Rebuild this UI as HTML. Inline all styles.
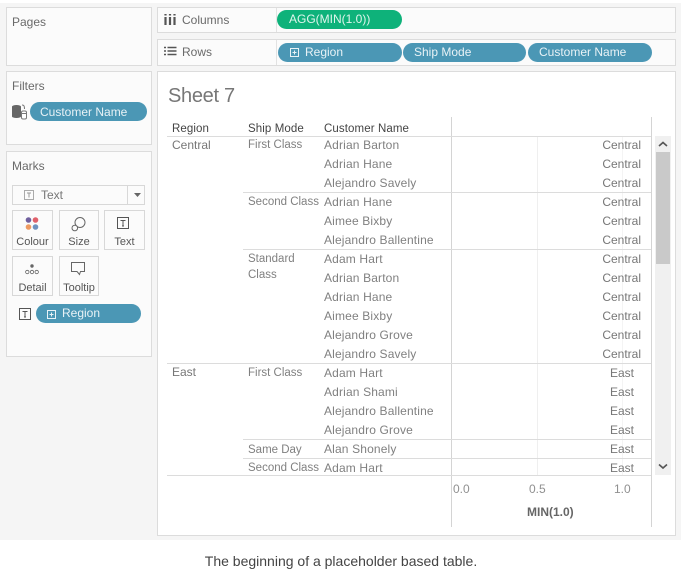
<!DOCTYPE html>
<html><head><meta charset="utf-8"><style>
html,body{margin:0;padding:0;background:#fff}
#r{position:relative;width:685px;height:576px;overflow:hidden;font-family:"Liberation Sans",sans-serif;background:#fff;filter:blur(.25px)}
#r div{position:absolute;box-sizing:border-box;white-space:nowrap}
.p{background:#fbfbfb;border:1px solid #dcdcdc}
.t{font-size:12px;letter-spacing:.15px;color:#808080;line-height:16px;height:16px}
.s{font-size:11.5px;letter-spacing:0;color:#808080;line-height:16px;height:16px}
.n{font-size:12px;letter-spacing:0;color:#777;line-height:16px;height:16px}
.h{font-size:11.5px;letter-spacing:.1px;color:#444;line-height:16px;height:16px}
.l{font-size:12px;letter-spacing:0;color:#6a6a6a;line-height:16px;height:16px}
.pill{background:#4b97b5;color:#e8f2f6;border-radius:10px;height:19px;line-height:19px;font-size:12px;letter-spacing:0}
.b{background:#fbfbfb;border:1px solid #d8d8d8;font-size:11px;color:#555;text-align:center;line-height:14px;padding-top:24px}
.hl{background:#dcdcdc;height:1px}
.v{background:#d4d4d4;width:1px}
svg{position:absolute}
</style></head><body><div id="r">
<div style="left:0;top:3px;width:681px;height:537px;background:#f5f5f5"></div>

<div class="p" style="left:6px;top:7px;width:146px;height:59px"></div>
<div class="l" style="left:12px;top:14px">Pages</div>
<div class="p" style="left:157px;top:7px;width:519px;height:26px"></div>
<div class="p" style="left:157px;top:39px;width:519px;height:27px"></div>
<div class="v" style="left:276px;top:8px;height:24px;background:#e2e2e2"></div>
<div class="v" style="left:276px;top:40px;height:25px;background:#e2e2e2"></div>
<svg style="left:164px;top:13px" width="14" height="13"><path d="M1.500 4v8M6 4v8M10.500 4v8" stroke="#555" stroke-width="2.200"/><path d="M1.500 1v1.500M6 1v1.500M10.500 1v1.500" stroke="#555" stroke-width="2.200"/></svg>
<div class="l" style="left:182px;top:12px">Columns</div>
<svg style="left:164px;top:46px" width="14" height="11"><path d="M0 1.500h2M3.500 1.500h9M0 5h2M3.500 5h9M0 8.500h2M3.500 8.500h9" stroke="#555" stroke-width="1.600"/></svg>
<div class="l" style="left:182px;top:44px">Rows</div>
<div class="pill" style="left:277px;top:10px;width:125px;background:#0eb27a;padding-left:12px;color:#dff5ec">AGG(MIN(1.0))</div>
<div class="pill" style="left:278px;top:43px;width:124px;padding-left:27px">Region</div>
<svg style="left:290px;top:48px" width="9" height="9"><path d="M.5.500h8v8h-8zM2.500 4.500h4M4.500 2.500v4" fill="none" stroke="#e8f2f6"/></svg>
<div class="pill" style="left:403px;top:43px;width:123px;padding-left:11px">Ship Mode</div>
<div class="pill" style="left:528px;top:43px;width:124px;padding-left:11px">Customer Name</div>

<div class="p" style="left:6px;top:71px;width:146px;height:74px"></div>
<div class="l" style="left:12px;top:78px">Filters</div>
<svg style="left:12px;top:104px" width="17" height="17"><path d="M0 2.500a4.500 1.500 0 0 1 9 0v10a4.500 1.500 0 0 1-9 0z" fill="#666"/><rect x="9.500" y="7" width="5" height="8" rx="1.500" fill="#fff" stroke="#777"/><path d="M9.500 9.500h5M10 1c2 0 2.500 1 2.500 4" fill="none" stroke="#777"/></svg>
<div class="pill" style="left:30px;top:102px;width:117px;padding-left:10px;line-height:20px">Customer Name</div>

<div class="p" style="left:6px;top:151px;width:146px;height:206px"></div>
<div class="l" style="left:12px;top:158px">Marks</div>
<div style="left:12px;top:185px;width:133px;height:20px;border:1px solid #d8d8d8;background:#fbfbfb"></div>
<div style="left:127px;top:186px;width:1px;height:18px;background:#d8d8d8"></div>
<svg style="left:134px;top:193px" width="7" height="4"><path d="M0 0h7L3.500 4z" fill="#666"/></svg>
<svg style="left:24px;top:190px" width="11" height="11"><path d="M.5.500h9v9h-9z" fill="none" stroke="#aaa"/><path d="M3 3h4M5 3v4.500" stroke="#999"/></svg>
<div class="l" style="left:41px;top:187px;color:#777">Text</div>

<div class="b" style="left:12px;top:210px;width:41px;height:40px">Colour</div>
<div class="b" style="left:59px;top:210px;width:40px;height:40px">Size</div>
<div class="b" style="left:104px;top:210px;width:41px;height:40px">Text</div>
<div class="b" style="left:12px;top:256px;width:41px;height:40px">Detail</div>
<div class="b" style="left:59px;top:256px;width:40px;height:40px">Tooltip</div>
<svg style="left:24px;top:216px" width="16" height="16"><circle cx="4.500" cy="4" r="2.800" fill="#6f5f9e"/><circle cx="11.500" cy="4" r="2.800" fill="#e0606a"/><circle cx="4.500" cy="11" r="2.800" fill="#ee9a62"/><circle cx="11.500" cy="11" r="2.800" fill="#6f92c0"/></svg>
<svg style="left:71px;top:216px" width="16" height="16"><circle cx="9" cy="6.500" r="5" fill="none" stroke="#666"/><circle cx="3.800" cy="12" r="2.800" fill="#fbfbfb" stroke="#666"/></svg>
<svg style="left:117px;top:217px" width="13" height="13"><path d="M.5.500h11v11h-11z" fill="none" stroke="#555"/><path d="M3.500 3.500h5M6 3.500v5.500M5 9h2" stroke="#555"/></svg>
<svg style="left:25px;top:264px" width="15" height="11"><circle cx="7" cy="2" r="1.700" fill="#666"/><circle cx="2.300" cy="8" r="1.700" fill="none" stroke="#666" stroke-width=".8"/><circle cx="7" cy="8" r="1.700" fill="none" stroke="#666" stroke-width=".8"/><circle cx="11.700" cy="8" r="1.700" fill="none" stroke="#666" stroke-width=".8"/></svg>
<svg style="left:71px;top:262px" width="15" height="14"><path d="M.5.500h13v9H9.500l-1 3-2.500-3H.5z" fill="none" stroke="#666"/></svg>
<svg style="left:19px;top:308px" width="12" height="12"><path d="M.5.500h11v11h-11z" fill="none" stroke="#555"/><path d="M3.500 3.500h5M6 3.500v5.500M5 9h2" stroke="#555"/></svg>
<div class="pill" style="left:36px;top:304px;width:105px;padding-left:26px">Region</div>
<svg style="left:47px;top:310px" width="9" height="9"><path d="M.5.500h8v8h-8zM2.500 4.500h4M4.500 2.500v4" fill="none" stroke="#e8f2f6"/></svg>

<div style="left:157px;top:71px;width:519px;height:465px;background:#fff;border:1px solid #dcdcdc"></div>
<div style="left:168px;top:84px;font-size:20px;line-height:24px;letter-spacing:-.3px;color:#777">Sheet 7</div>

<div class="h" style="left:172px;top:121px">Region</div>
<div class="h" style="left:248px;top:121px">Ship Mode</div>
<div class="h" style="left:324px;top:121px">Customer Name</div>

<div class="v" style="left:451px;top:117px;height:410px"></div>
<div class="v" style="left:651px;top:117px;height:410px"></div>
<div class="v" style="left:537px;top:137px;height:338px;background:#efefef"></div>
<div class="v" style="left:622px;top:137px;height:338px;background:#f4f4f4"></div>

<div class="hl" style="left:167px;top:136px;width:484px"></div>
<div class="hl" style="left:243px;top:192px;width:408px"></div>
<div class="hl" style="left:243px;top:249px;width:408px"></div>
<div class="hl" style="left:167px;top:363px;width:484px"></div>
<div class="hl" style="left:243px;top:439px;width:408px"></div>
<div class="hl" style="left:243px;top:458px;width:408px"></div>
<div class="hl" style="left:167px;top:475px;width:484px"></div>

<div class="n" style="left:172px;top:137px">Central</div>
<div class="n" style="left:172px;top:364px">East</div>
<div class="s" style="left:248px;top:137px">First Class</div>
<div class="s" style="left:248px;top:194px">Second Class</div>
<div class="s" style="left:248px;top:251px">Standard</div>
<div class="s" style="left:248px;top:267px">Class</div>
<div class="s" style="left:248px;top:365px">First Class</div>
<div class="s" style="left:248px;top:442px">Same Day</div>
<div class="s" style="left:248px;top:460px">Second Class</div>

<div class="t" style="left:324px;top:137px">Adrian Barton</div>
<div class="t" style="left:324px;top:156px">Adrian Hane</div>
<div class="t" style="left:324px;top:175px">Alejandro Savely</div>
<div class="t" style="left:324px;top:194px">Adrian Hane</div>
<div class="t" style="left:324px;top:213px">Aimee Bixby</div>
<div class="t" style="left:324px;top:232px">Alejandro Ballentine</div>
<div class="t" style="left:324px;top:251px">Adam Hart</div>
<div class="t" style="left:324px;top:270px">Adrian Barton</div>
<div class="t" style="left:324px;top:289px">Adrian Hane</div>
<div class="t" style="left:324px;top:308px">Aimee Bixby</div>
<div class="t" style="left:324px;top:327px">Alejandro Grove</div>
<div class="t" style="left:324px;top:346px">Alejandro Savely</div>
<div class="t" style="left:324px;top:365px">Adam Hart</div>
<div class="t" style="left:324px;top:384px">Adrian Shami</div>
<div class="t" style="left:324px;top:403px">Alejandro Ballentine</div>
<div class="t" style="left:324px;top:422px">Alejandro Grove</div>
<div class="t" style="left:324px;top:441px">Alan Shonely</div>
<div class="t" style="left:324px;top:460px">Adam Hart</div>

<div class="n" style="right:44px;top:137px">Central</div>
<div class="n" style="right:44px;top:156px">Central</div>
<div class="n" style="right:44px;top:175px">Central</div>
<div class="n" style="right:44px;top:194px">Central</div>
<div class="n" style="right:44px;top:213px">Central</div>
<div class="n" style="right:44px;top:232px">Central</div>
<div class="n" style="right:44px;top:251px">Central</div>
<div class="n" style="right:44px;top:270px">Central</div>
<div class="n" style="right:44px;top:289px">Central</div>
<div class="n" style="right:44px;top:308px">Central</div>
<div class="n" style="right:44px;top:327px">Central</div>
<div class="n" style="right:44px;top:346px">Central</div>
<div class="n" style="right:51px;top:365px">East</div>
<div class="n" style="right:51px;top:384px">East</div>
<div class="n" style="right:51px;top:403px">East</div>
<div class="n" style="right:51px;top:422px">East</div>
<div class="n" style="right:51px;top:441px">East</div>
<div class="n" style="right:51px;top:460px">East</div>

<div style="left:655px;top:136px;width:16px;height:339px;background:#f0f0f0"></div>
<div style="left:656px;top:152px;width:14px;height:112px;background:#c9c9c9"></div>
<svg style="left:658px;top:141px" width="10" height="7"><path d="M1 5l4-3.500L9 5" fill="none" stroke="#555" stroke-width="1.600"/></svg>
<svg style="left:658px;top:463px" width="10" height="7"><path d="M1 1.500L5 5l4-3.500" fill="none" stroke="#555" stroke-width="1.600"/></svg>

<div class="n" style="left:453px;top:481px;color:#909090">0.0</div>
<div class="n" style="left:529px;top:481px;color:#909090">0.5</div>
<div class="n" style="left:614px;top:481px;color:#909090">1.0</div>
<div style="left:527px;top:504px;font-size:12px;line-height:16px;color:#666;font-weight:700">MIN(1.0)</div>

<div style="left:0;top:552px;width:685px;text-align:center;padding-right:3px;font-size:14px;line-height:18px;color:#444">The beginning of a placeholder based table.</div>
</div></body></html>
